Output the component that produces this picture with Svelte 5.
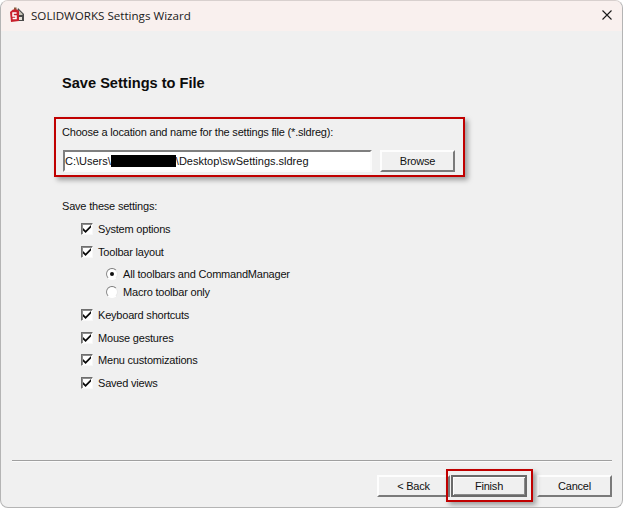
<script>
  const before = [
    { label: 'System options' },
    { label: 'Toolbar layout' }
  ];
  const after = ['Keyboard shortcuts', 'Mouse gestures', 'Menu customizations', 'Saved views'];
  const radios = [
    { label: 'All toolbars and CommandManager', on: true },
    { label: 'Macro toolbar only', on: false }
  ];
</script>

{#snippet check(label)}
  <div class="row">
    <span class="box">
      <svg viewBox="0 0 8 8" width="8" height="8" aria-hidden="true">
        <path d="M0 3 L0 5.6 L2.6 8 L8 2.4 L8 0 L2.6 5.4 Z" fill="#0a0a0a" />
      </svg>
    </span>
    <span>{label}</span>
  </div>
{/snippet}

<div class="window">
  <header class="titlebar">
    <svg class="logo" viewBox="0 0 16 16" width="16" height="16" aria-hidden="true">
      <path d="M9 1 L15 7 L15 14 L8 14 L8 5 Z" fill="#4a4a4a" />
      <path d="M9.5 3 L13.5 7 L13.5 8 L10 8 L10 5 Z" fill="#c9c4b8" />
      <rect x="10" y="10" width="3" height="3" fill="#e6e2da" />
      <path d="M5 0.5 L7.5 0.5 L7.5 3 L5 3 Z" fill="#8a5a3a" />
      <path d="M1 5 L4 2.5 L8 2.5 L10 4 L10 14 L2 15 Z" fill="#c8202c" />
      <path d="M7.6 6 H4 V9 H7 V11.6 H3.6" fill="none" stroke="#fff" stroke-width="1.5" />
    </svg>
    <span class="app-title">SOLIDWORKS Settings Wizard</span>
    <svg class="close" viewBox="0 0 10 10" width="10" height="10" aria-hidden="true">
      <path d="M0.5 0.5 L9.5 9.5 M9.5 0.5 L0.5 9.5" stroke="#1a1a1a" stroke-width="1.1" />
    </svg>
  </header>

  <main class="body">
    <h1>Save Settings to File</h1>

    <section class="location">
      <div class="mark mark-location"></div>
      <p class="loc-label">Choose a location and name for the settings file (*.sldreg):</p>
      <div class="loc-row">
        <div class="field">C:\Users\<span class="redact"></span>\Desktop\swSettings.sldreg</div>
        <button class="btn browse">Browse</button>
      </div>
    </section>

    <p class="save-label">Save these settings:</p>

    <div class="options">
      {#each before as item}
        {@render check(item.label)}
      {/each}
      <div class="radios">
        {#each radios as r}
          <div class="row radio-row">
            <span class="radio" class:on={r.on}></span>
            <span>{r.label}</span>
          </div>
        {/each}
      </div>
      {#each after as label}
        {@render check(label)}
      {/each}
    </div>
  </main>

  <footer class="foot">
    <div class="sep"></div>
    <div class="buttons">
      <button class="btn back">&lt; Back</button>
      <button class="btn finish">
        Finish
        <span class="mark mark-finish"></span>
      </button>
      <button class="btn cancel">Cancel</button>
    </div>
  </footer>
</div>

<style>
  :global(body) {
    background: #fff;
  }

  .window {
    position: relative;
    box-sizing: border-box;
    width: 623px;
    height: 508px;
    display: flex;
    flex-direction: column;
    background: #f0f0f0;
    border: 1px solid #b4b4b4;
    border-top-color: #d8d0ce;
    border-radius: 8px;
    overflow: hidden;
    font-family: "Liberation Sans", Arial, sans-serif;
    font-size: 11px;
    letter-spacing: -0.2px;
    color: #111;
  }

  .titlebar {
    flex: none;
    box-sizing: border-box;
    height: 30px;
    display: flex;
    align-items: center;
    padding: 0 10px 2px 8px;
    background: #f9f0ee;
  }
  .logo { flex: none; }
  .app-title {
    margin-left: 6px;
    font-family: "Open Sans", "Noto Sans", sans-serif;
    font-size: 11.6px;
    letter-spacing: 0;
    color: #1a1a1a;
  }
  .close { margin-left: auto; }

  .body {
    flex: 1;
    padding: 0 0 0 61px;
  }

  h1 {
    margin: 43px 0 0;
    font-size: 14.6px;
    line-height: 18px;
    font-weight: bold;
    letter-spacing: 0;
    color: #0c0c0c;
  }

  .location {
    position: relative;
    margin-top: 32px;
  }
  .loc-label {
    margin: 0;
    line-height: 16px;
  }
  .loc-row {
    display: flex;
    margin: 10px 0 0 1px;
  }
  .field {
    box-sizing: border-box;
    width: 309px;
    height: 22px;
    padding-bottom: 1px;
    white-space: nowrap;
    letter-spacing: 0;
    background: #fff;
    border: 2px solid;
    border-color: #7f7f7f #fbfbfb #fbfbfb #7f7f7f;
    display: flex;
    align-items: center;
  }
  .redact {
    display: inline-block;
    width: 65px;
    height: 12px;
    background: #000;
  }

  .btn {
    appearance: none;
    box-sizing: border-box;
    height: 22px;
    width: 75px;
    padding: 0;
    font: inherit;
    letter-spacing: inherit;
    color: #111;
    background: #f0f0f0;
    border: 2px solid;
    border-color: #fdfdfd #7a7a7a #7a7a7a #fdfdfd;
  }
  .browse { margin-left: 8px; }
  .back { width: 73px; }

  .save-label {
    margin: 26px 0 0;
    line-height: 16px;
  }

  .options {
    margin: 7px 0 0 19px;
    display: flex;
    flex-direction: column;
    gap: 6.7px;
  }
  .row {
    display: flex;
    align-items: center;
    gap: 5px;
    height: 16px;
    white-space: nowrap;
  }
  .box {
    box-sizing: border-box;
    flex: none;
    width: 12px;
    height: 12px;
    background: #fff;
    border: 1px solid;
    border-color: #6e6e6e #f8f8f8 #f8f8f8 #6e6e6e;
    box-shadow: inset 1px 1px 0 #8e8e8e;
    display: flex;
    align-items: center;
    justify-content: center;
  }
  .box svg { flex: none; }

  .radios {
    margin: 0 0 0 25px;
    display: flex;
    flex-direction: column;
    gap: 2px;
  }
  .radio {
    box-sizing: border-box;
    flex: none;
    width: 12px;
    height: 12px;
    border-radius: 50%;
    background: #fff;
    border: 1px solid;
    border-color: #7a7a7a #e8e8e8 #fff #8a8a8a;
    display: flex;
    align-items: center;
    justify-content: center;
  }
  .radio.on::after {
    content: "";
    width: 4px;
    height: 4px;
    border-radius: 50%;
    background: #111;
  }

  .foot {
    flex: none;
    padding: 0 10px 10px 11px;
  }
  .sep {
    height: 1px;
    background: #a0a0a0;
    border-bottom: 1px solid #fbfbfb;
  }
  .buttons {
    display: flex;
    justify-content: flex-end;
    margin-top: 13px;
  }
  .finish {
    position: relative;
    width: 76px;
    margin-left: 1px;
    border: 2px solid;
    border-color: #6a6a6a;
    box-shadow: inset 1px 1px 0 #fdfdfd, inset -1px -1px 0 #8a8a8a;
  }
  .cancel { margin-left: 10px; }

  /* red callouts drawn over the dialog */
  .mark {
    position: absolute;
    box-sizing: border-box;
    border: 2px solid #c00000;
    box-shadow: 3px 3px 5px rgba(0, 0, 0, 0.35);
    pointer-events: none;
  }
  .mark-location {
    left: -8px;
    top: -7px;
    width: 411px;
    height: 60px;
  }
  .mark-finish {
    left: -7px;
    top: -8px;
    width: 87px;
    height: 33px;
  }
</style>
